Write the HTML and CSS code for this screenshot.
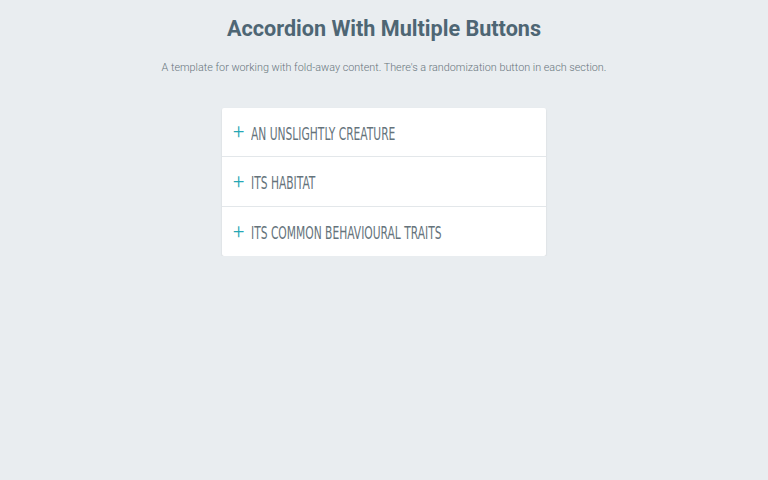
FILE: index.html
```html
<!DOCTYPE html>
<html lang="en">
<head>
    <meta charset="UTF-8">
    <meta name="viewport" content="width=device-width, initial-scale=1.0">
    <title>Accordion With Multiple Buttons</title>
    <link rel="stylesheet" href="styles.css">
</head>
<body>
    <header class="intro">
        <h1>Accordion With Multiple Buttons</h1>
        <p>A template for working with fold-away content. There's a randomization button in each section.</p>
    </header>
    <div class="accordion">
        <div class="section">
            <button class="toggle"><span class="plus">+</span><span class="label">An Unslightly Creature</span></button>
        </div>
        <div class="section">
            <button class="toggle"><span class="plus">+</span><span class="label">Its Habitat</span></button>
        </div>
        <div class="section">
            <button class="toggle"><span class="plus">+</span><span class="label">Its Common Behavioural Traits</span></button>
        </div>
    </div>
</body>
</html>
```

FILE: styles.css
```css
body {
    margin: 0;
    background: #e9edf0;
    font-family: Roboto, "Liberation Sans", sans-serif;
    color: #4f6672;
}
.intro {
    text-align: center;
    padding-top: 16px;
}
.intro h1 {
    margin: 0;
    font-size: 21.6px;
    font-weight: 700;
    color: #4e6674;
}
.intro p {
    margin: 20px 0 0;
    font-size: 10.8px;
    font-weight: 300;
    color: #68757d;
}
.accordion {
    width: 324px;
    margin: 34px auto 0;
    background: #fff;
    border-radius: 2px;
    box-shadow: 0 1px 2px rgba(0, 0, 0, 0.12);
}
.section + .section {
    border-top: 1px solid #e3e7ea;
}
.toggle {
    display: flex;
    align-items: center;
    width: 100%;
    height: 49px;
    padding: 0 0 0 11px;
    border: 0;
    background: none;
    text-align: left;
    cursor: pointer;
}
.section:first-child .toggle {
    height: 48px;
}
.plus {
    width: 18px;
    font-family: Roboto, sans-serif;
    font-size: 20px;
    font-weight: 300;
    color: #26a7b5;
    margin-top: -2px;
}
/* narrow uppercase heading, squeezed to a tall condensed look */
.label {
    display: inline-block;
    margin-top: 3px;
    font-family: "DejaVu Sans Condensed", "DejaVu Sans", sans-serif;
    font-stretch: condensed;
    font-size: 17px;
    font-weight: 400;
    text-transform: uppercase;
    color: #65737b;
    white-space: nowrap;
    transform: scaleX(0.7);
    transform-origin: left center;
}
```
